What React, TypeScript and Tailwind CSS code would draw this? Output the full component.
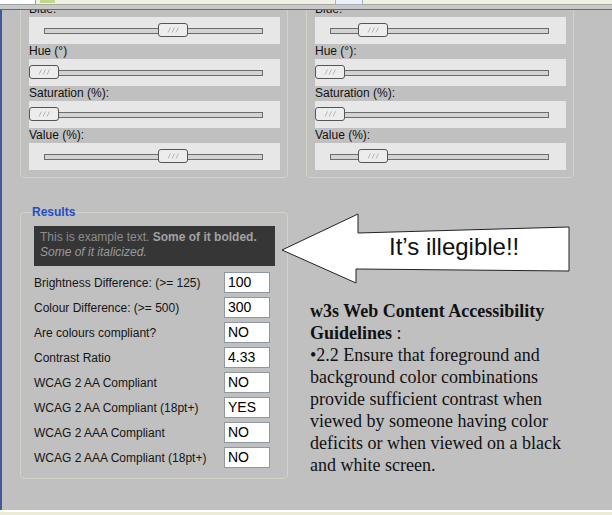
import React from 'react';

type Slider = { label: string; value: number };

const leftSliders: Slider[] = [
  { label: 'Blue:', value: 0.589 },
  { label: 'Hue (°)', value: 0 },
  { label: 'Saturation (%):', value: 0 },
  { label: 'Value (%):', value: 0.589 },
];

const rightSliders: Slider[] = [
  { label: 'Blue:', value: 0.196 },
  { label: 'Hue (°):', value: 0 },
  { label: 'Saturation (%):', value: 0 },
  { label: 'Value (%):', value: 0.196 },
];

const results = [
  ['Brightness Difference: (>= 125)', '100'],
  ['Colour Difference: (>= 500)', '300'],
  ['Are colours compliant?', 'NO'],
  ['Contrast Ratio', '4.33'],
  ['WCAG 2 AA Compliant', 'NO'],
  ['WCAG 2 AA Compliant (18pt+)', 'YES'],
  ['WCAG 2 AAA Compliant', 'NO'],
  ['WCAG 2 AAA Compliant (18pt+)', 'NO'],
];

const SliderRow: React.FC<Slider> = ({ label, value }) => (
  <div>
    <div className="h-[15px] leading-[15px] text-[12px] text-[#111]">{label}</div>
    <div className="relative h-[27px] bg-[#e7e7e7]">
      <div className="absolute left-[15px] top-[11px] h-[6px] w-[219px] border border-[#6b6b6b] bg-[#d3d3d3]" />
      <div
        className="absolute top-[6px] flex h-[14px] w-[30px] items-center justify-center rounded-[3px] border border-[#555] bg-[#ededed]"
        style={{ left: `${Math.round(value * 219)}px` }}
      >
        <svg width="12" height="6" viewBox="0 0 12 6">
          <path d="M1 5.5 L3.5 0.5 M5 5.5 L7.5 0.5 M9 5.5 L11.5 0.5" stroke="#b4b4b4" strokeWidth="1" fill="none" />
        </svg>
      </div>
    </div>
  </div>
);

const SliderPanel: React.FC<{ sliders: Slider[] }> = ({ sliders }) => (
  <div className="w-[268px] rounded-[4px] border border-[#d2d2c8] pl-[8px] pr-[7px] pt-[1px] pb-[7px]">
    {sliders.map((s) => (
      <SliderRow key={s.label} {...s} />
    ))}
  </div>
);

const App: React.FC = () => {
  return (
    <div className="flex h-[515px] w-[612px] flex-col overflow-hidden bg-[#c0c0c0] font-['Liberation_Sans',Arial,sans-serif]">
      {/* browser chrome strip */}
      <div className="h-[10px] shrink-0 border-b border-[#6a6a6a] bg-[#c8c8c8]">
        <div className="flex h-[5px] items-start border-b border-[#a8a8a0] bg-[#f1f0e6]">
          <div className="h-[5px] w-[36px] border-r border-b border-[#a0a0a0] bg-white" />
          <div className="ml-[4px] h-[3px] w-[15px] bg-[#c4d68a]" />
          <div className="ml-[280px] h-[5px] w-[28px] border-x border-b border-[#a8b0bc] bg-[#eef2f8]" />
        </div>
      </div>

      <div className="flex min-h-0 flex-1">
        <div className="w-[2px] shrink-0 bg-[#3d5c9e]" />
        <div className="relative flex-1 overflow-hidden">
          <div className="-mt-[10px] flex pl-[18px]">
            <SliderPanel sliders={leftSliders} />
            <div className="ml-[18px]">
              <SliderPanel sliders={rightSliders} />
            </div>
          </div>

          <div className="mt-[27px] flex pl-[18px]">
            <fieldset className="w-[268px] rounded-[4px] border border-[#d2d2c8] pl-[13px] pr-[12px] pt-[7px] pb-[10px]">
              <legend className="-ml-[2px] text-[12px] font-bold leading-[14px] text-[#1f4fc6]">Results</legend>
              <div className="h-[40px] bg-[#363636] px-[6px] pt-[4px] text-[12px] leading-[15px] text-[#8c8c8c]">
                This is example text. <span className="font-bold text-[#a2a2a2]">Some of it bolded.</span>
                <br />
                <span className="italic text-[#9a9a9a]">Some of it italicized.</span>
              </div>
              <div className="mt-[6px] flex flex-col gap-[4px]">
                {results.map(([label, val]) => (
                  <div key={label} className="flex items-center">
                    <div className="w-[190px] text-[12px] text-[#151515]">{label}</div>
                    <div className="h-[21px] w-[46px] border border-[#8d98a4] bg-white pl-[3px] text-[14px] leading-[19px] text-black">
                      {val}
                    </div>
                  </div>
                ))}
              </div>
            </fieldset>

            <div className="ml-[22px] mt-[95px] w-[280px] font-['Liberation_Serif','Times_New_Roman',serif] text-[18px] leading-[22px] text-[#111]">
              <span className="font-bold">w3s Web Content Accessibility Guidelines</span> :
              <br />
              •2.2 Ensure that foreground and background color combinations provide sufficient contrast when viewed by
              someone having color deficits or when viewed on a black and white screen.
            </div>
          </div>

          {/* callout arrow */}
          <svg className="absolute left-[278px] top-[200px]" width="294" height="78" viewBox="0 0 294 78">
            <polygon
              points="2,40 78,4 78,23 289,17 289,61 76,59 76,73"
              fill="white"
              stroke="#222"
              strokeWidth="1"
            />
            <text x="109" y="45" fontSize="24" fill="#111" fontFamily="'Liberation Sans', Arial, sans-serif">
              It’s illegible!!
            </text>
          </svg>
        </div>
      </div>

      <div className="h-[5px] shrink-0 border-t-2 border-white bg-[#ecead8]" />
    </div>
  );
};

export default App;
